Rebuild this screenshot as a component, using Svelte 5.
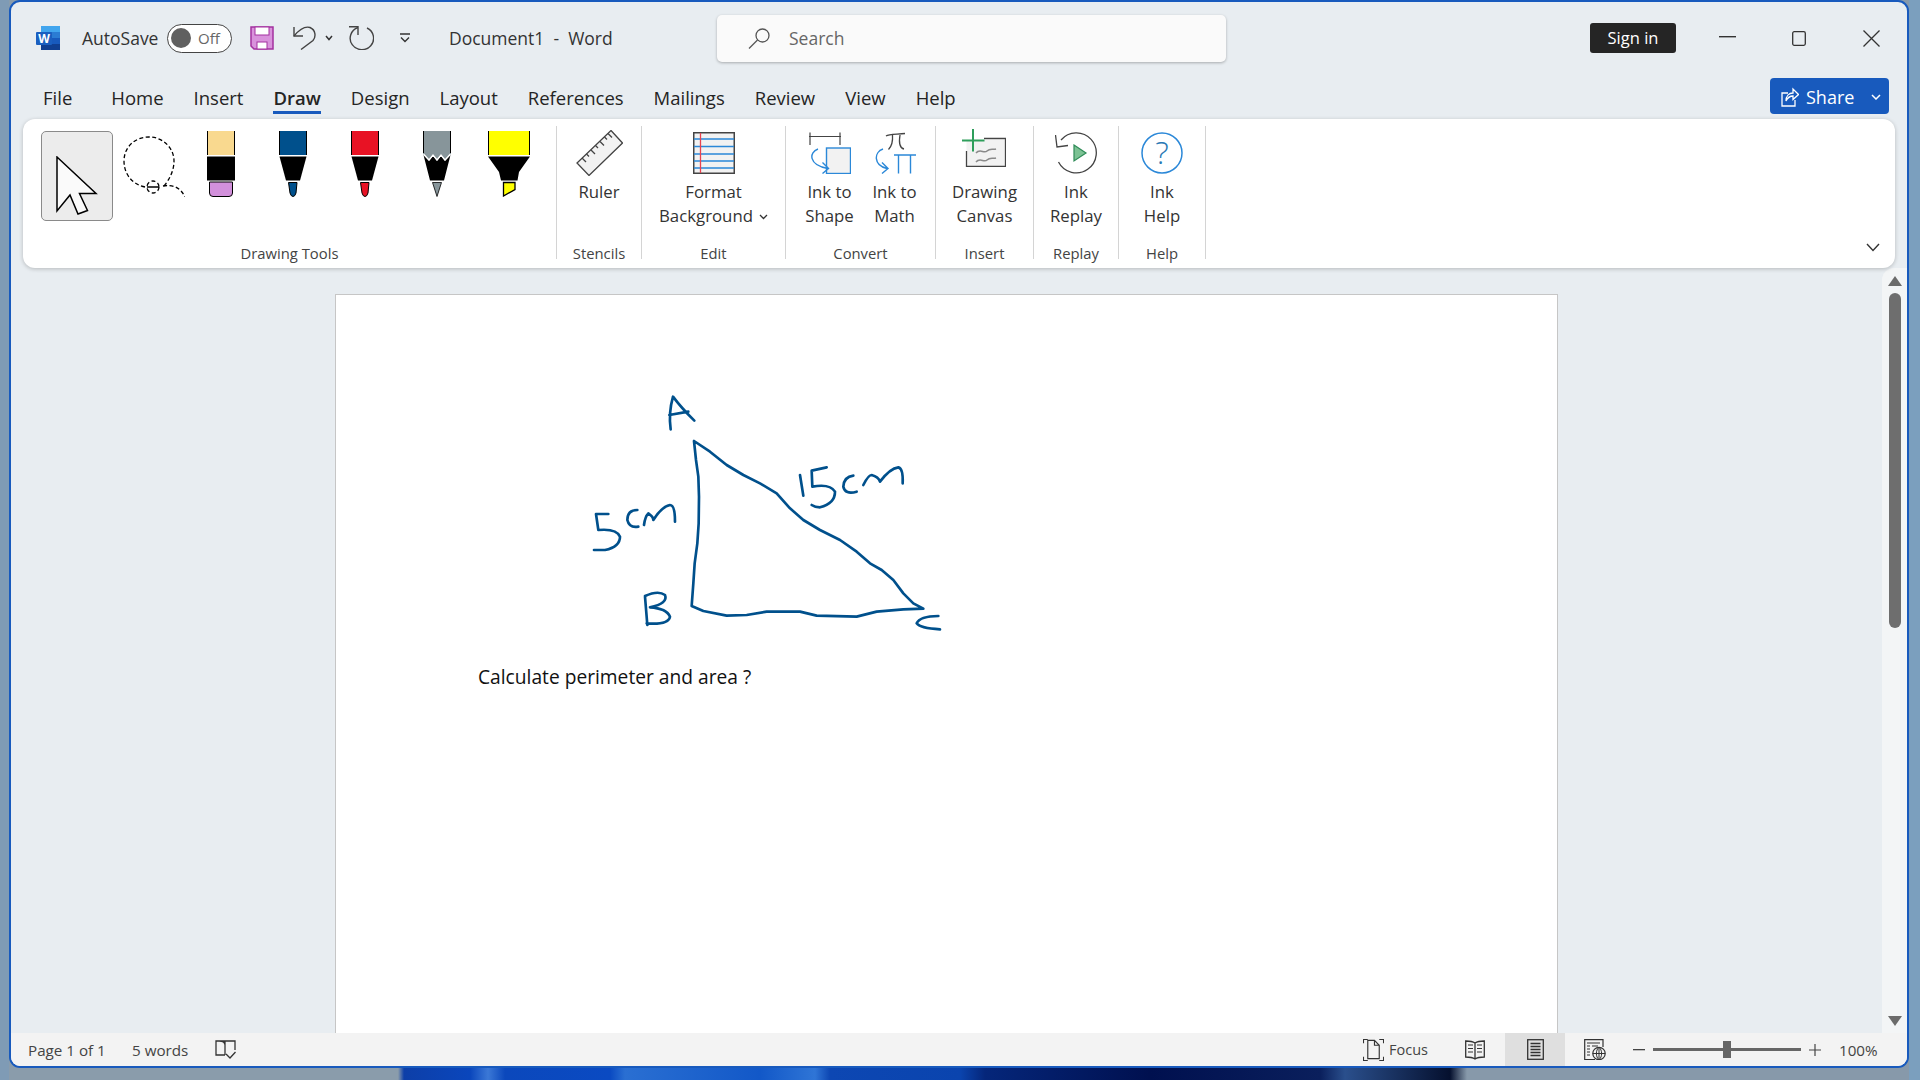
<script>
    const tabs = ['File', 'Home', 'Insert', 'Draw', 'Design', 'Layout', 'References', 'Mailings', 'Review', 'View', 'Help'];

    const pens = [
        { color: '#00508c', tip: '#00508c' },
        { color: '#e81224', tip: '#e81224' }
    ];
</script>

<div class="desktop">
    <div class="window">
        <header class="titlebar">
            <svg class="word" width="24" height="24" viewBox="0 0 24 24">
                <rect x="5" y="0" width="19" height="6" fill="#41a5ee"/>
                <rect x="5" y="6" width="19" height="6" fill="#2b7cd3"/>
                <rect x="5" y="12" width="19" height="6" fill="#185abd"/>
                <rect x="5" y="18" width="19" height="6" fill="#103f91"/>
                <rect x="0" y="6" width="16" height="13" rx="1" fill="#1a5fc0"/>
                <text x="8" y="16.5" text-anchor="middle" class="word-w">W</text>
            </svg>
            <span class="autosave">AutoSave</span>
            <div class="toggle"><span class="knob"></span><span class="off">Off</span></div>
            <svg class="save" width="24" height="24" viewBox="0 0 24 24">
                <path d="M1 1H23V23H4L1 20Z" fill="#d992dc" stroke="#a3319f" stroke-width="1.5"/>
                <rect x="5" y="1" width="14" height="8" fill="#fff" stroke="#a3319f"/>
                <rect x="7" y="16" width="10" height="7" fill="#fff" stroke="#a3319f"/>
            </svg>
            <svg class="undo" width="23" height="24" viewBox="0 0 23 24" fill="none" stroke="#444" stroke-width="1.4">
                <path d="M1 1V10H10"/>
                <path d="M1 10C6 4 12 0 17 1.500C23 4 23 11 20 14.500L8 23.500"/>
            </svg>
            <svg class="small-chev" width="8" height="6" viewBox="0 0 8 6" fill="none" stroke="#333" stroke-width="1.500"><path d="M1 1L4 4.500L7 1"/></svg>
            <svg class="redo" width="25" height="24" viewBox="0 0 25 24" fill="none" stroke="#444" stroke-width="1.4">
                <path d="M0 0.700H9V9"/>
                <path d="M9 1.500A11.700 11.400 0 1 0 18 2"/>
            </svg>
            <svg class="customize" width="10" height="10" viewBox="0 0 10 10" fill="none" stroke="#333" stroke-width="1.400"><path d="M0 1H10M1 4.500L5 8.500L9 4.500"/></svg>
            <span class="doc-title">Document1&nbsp; -&nbsp; Word</span>
            <div class="search">
                <svg width="22" height="21" viewBox="0 0 22 21" fill="none" stroke="#555" stroke-width="1.300">
                    <circle cx="14.500" cy="7.500" r="6.500"/><path d="M9.500 12L1 20.500"/>
                </svg>
                <span>Search</span>
            </div>
            <div class="signin">Sign in</div>
            <svg class="win-min" width="17" height="2" viewBox="0 0 17 2"><rect width="17" height="1.400" fill="#333"/></svg>
            <svg class="win-max" width="14" height="15" viewBox="0 0 14 15" fill="none" stroke="#333" stroke-width="1.300"><rect x="0.700" y="0.700" width="12.600" height="13.600" rx="1.500"/></svg>
            <svg class="win-close" width="17" height="17" viewBox="0 0 17 17" fill="none" stroke="#333" stroke-width="1.300"><path d="M0.500 0.500L16.500 16.500M16.500 0.500L0.500 16.500"/></svg>
        </header>

        <nav class="tabs">
            {#each tabs as tab}
                <span class="tab" class:active={tab === 'Draw'}>{tab}</span>
            {/each}
            <div class="share">
                <svg width="18" height="20" viewBox="0 0 18 20" fill="none" stroke="#fff" stroke-width="1.300">
                    <path d="M7 6H1V19H14V13"/>
                    <path d="M5 14C5 9 8 6 12 6V2L17.500 7.500L12 12.500V9C9 9 6.500 11 5 14Z"/>
                </svg>
                <span>Share</span>
                <svg class="share-chev" width="10" height="6" viewBox="0 0 10 6" fill="none" stroke="#fff" stroke-width="1.500"><path d="M1 1L5 5L9 1"/></svg>
            </div>
        </nav>

        <section class="ribbon">
            <div class="group g-tools">
                <div class="tools">
                    <div class="select">
                        <svg width="42" height="59" viewBox="0 0 42 59">
                            <path d="M1 1L40 37.500H23.500L31.500 54.500L22 58L14 39L1 55Z" fill="#fafafa" stroke="#000" stroke-width="1.500" stroke-linejoin="miter"/>
                        </svg>
                    </div>
                    <svg class="lasso" width="62" height="61" viewBox="0 0 62 61" fill="none" stroke="#000" stroke-width="1.300" stroke-dasharray="4 2.500">
                        <path d="M22 51C8 48 1 37 1 25C1 11 12 1 26 1C40 1 51 12 51 25C51 35 46 44 41 50"/>
                        <circle cx="30" cy="51" r="6"/>
                        <path d="M24 51H36" stroke-dasharray="none"/>
                        <path d="M40 50C50 48 58 52 62 61"/>
                    </svg>
                    <svg class="pen eraser" width="28" height="66" viewBox="0 0 28 66">
                        <rect x="0" y="0" width="28" height="24" fill="#f9d98f"/>
                        <path d="M0.500 0V24M27.500 0V24" stroke="#000"/>
                        <rect x="0" y="25.500" width="28" height="24" fill="#000"/>
                        <path d="M2.500 51V62Q2.500 65.500 6 65.500H22Q25.500 65.500 25.500 62V51Z" fill="#d290db" stroke="#000"/>
                    </svg>
                    {#each pens as pen}
                        <svg class="pen" width="28" height="66" viewBox="0 0 28 66">
                            <rect x="0" y="0" width="28" height="24" fill={pen.color}/>
                            <path d="M0.500 0V24M27.500 0V24" stroke="#000"/>
                            <path d="M0.500 25.500H27.500L21 49.500H7Z" fill="#000"/>
                            <path d="M9.500 51.500H18L17 62Q16 65.500 14 65.500Q12 65.500 11 62Z" fill={pen.tip} stroke="#000"/>
                        </svg>
                    {/each}
                    <svg class="pen" width="28" height="66" viewBox="0 0 28 66">
                        <rect x="0" y="0" width="28" height="24" fill="#87959a"/>
                        <path d="M0.500 0V22M27.500 0V22" stroke="#000"/>
                        <path d="M0.500 24L6 30L10 25L14 30L18 25L22 30L27.500 24L21 49.500H7Z" fill="#000"/>
                        <path d="M0.500 23L6 29L10 24L14 29L18 24L22 29L27.500 23" fill="#87959a" stroke="#fff" stroke-width="1.300"/>
                        <path d="M9.500 51.500H18.500L14 65.500Z" fill="#87959a" stroke="#000" stroke-width="0.800"/>
                    </svg>
                    <svg class="pen marker" width="42" height="66" viewBox="0 0 42 66">
                        <rect x="0" y="0" width="42" height="24" fill="#ffff00"/>
                        <path d="M0.500 0V24M41.500 0V24" stroke="#000"/>
                        <path d="M0 25.500H42L31 41L29.500 49.500H13L11 41Z" fill="#000"/>
                        <path d="M15.500 51.500H27V58.500L15.500 65Z" fill="#ffff00" stroke="#000" stroke-width="1.300"/>
                    </svg>
                </div>
                <div class="label">Drawing Tools</div>
            </div>

            <div class="group g-stencils">
                <div class="btn">
                    <div class="btn-icon">
                        <svg width="47" height="46" viewBox="0 0 47 46" fill="none" stroke="#444" stroke-width="1.300">
                            <path d="M35 0.500L46.500 13L13 45.500L1 33Z" fill="#f2f2f2"/>
                            <path d="M6 28L10 32M10.500 24L13 26.500M15 20L19 24M19.500 15.500L22 18M24 11.500L28 15.500M28.500 7L31 9.500M32 3.500L36 7.500"/>
                        </svg>
                    </div>
                    <div class="btn-text">Ruler</div>
                </div>
                <div class="label">Stencils</div>
            </div>

            <div class="group g-edit">
                <div class="btn">
                    <div class="btn-icon">
                        <svg width="42" height="42" viewBox="0 0 42 42" fill="none">
                            <rect x="0.750" y="0.750" width="40.500" height="40.500" fill="#f2f2f2" stroke="#444" stroke-width="1.500"/>
                            <path d="M1 7H41M1 14.500H41M1 22H41M1 29H41M1 36H41" stroke="#2b88d8" stroke-width="1.300"/>
                            <path d="M7.500 1V41" stroke="#e8434f" stroke-width="1.300"/>
                        </svg>
                    </div>
                    <div class="btn-text">Format</div>
                    <div class="btn-text">Background<svg class="fmt-chev" width="9" height="6" viewBox="0 0 9 6" fill="none" stroke="#333" stroke-width="1.300"><path d="M1 1L4.500 4.500L8 1"/></svg></div>
                </div>
                <div class="label">Edit</div>
            </div>

            <div class="group g-convert">
                <div class="convert-row">
                    <div class="btn">
                        <div class="btn-icon">
                            <svg width="42" height="42" viewBox="0 0 42 42" fill="none">
                                <path d="M1 0.500V13M31 0.500V13M0 4.500H32" stroke="#444" stroke-width="1.200"/>
                                <rect x="17.500" y="16" width="24" height="25.500" fill="#f2f2f2" stroke="#2b88d8" stroke-width="1.400"/>
                                <path d="M9 17C0 20 -1 33 19 36.500M13.500 30.500L19.500 36.500L13.500 41.500" stroke="#2b88d8" stroke-width="1.400"/>
                            </svg>
                        </div>
                        <div class="btn-text">Ink to</div>
                        <div class="btn-text">Shape</div>
                    </div>
                    <div class="btn">
                        <div class="btn-icon">
                            <svg width="42" height="42" viewBox="0 0 42 42" fill="none">
                                <path d="M12 4C15 2 24 2.500 31 1.500M18.500 3C19 10 17 15 14.500 17.500M26 3C25 9 25.500 16 30 17" stroke="#444" stroke-width="1.300"/>
                                <path d="M9 17C0 20 -1 33 13 36.500M8 30.500L14 36.500L8 41.500" stroke="#2b88d8" stroke-width="1.400"/>
                                <path d="M20 23H42M24.500 23V41.500M36.500 23V41.500" stroke="#2b88d8" stroke-width="1.400"/>
                            </svg>
                        </div>
                        <div class="btn-text">Ink to</div>
                        <div class="btn-text">Math</div>
                    </div>
                </div>
                <div class="label">Convert</div>
            </div>

            <div class="group g-insert">
                <div class="btn">
                    <div class="btn-icon canvas-icon">
                        <svg width="44" height="38" viewBox="0 0 44 38" fill="none">
                            <path d="M4.500 11H43.500V37.500H4.500Z" fill="#f2f2f2"/>
                            <path d="M22 9.500H43.500V37.500H4.500V22" stroke="#444" stroke-width="1.300"/>
                            <path d="M0 11.500H22.500M11 0V22.500" stroke="#2e9e5b" stroke-width="2"/>
                            <path d="M14 24C18 19 22 25 25 22C28 19 31 21 34 20M14 33C18 28 22 34 25 31C28 28 31 30 34 29" stroke="#8a8a8a" stroke-width="1.500"/>
                        </svg>
                    </div>
                    <div class="btn-text">Drawing</div>
                    <div class="btn-text">Canvas</div>
                </div>
                <div class="label">Insert</div>
            </div>

            <div class="group g-replay">
                <div class="btn">
                    <div class="btn-icon">
                        <svg width="42" height="42" viewBox="0 0 42 42" fill="none">
                            <path d="M6 8A20 20 0 1 1 3.500 30" stroke="#444" stroke-width="1.300"/>
                            <path d="M0.500 3L2 15L13 13.500" stroke="#444" stroke-width="1.300"/>
                            <path d="M19 13L31 21L19 29Z" fill="#7cc294" stroke="#2e8b57" stroke-width="1.200"/>
                        </svg>
                    </div>
                    <div class="btn-text">Ink</div>
                    <div class="btn-text">Replay</div>
                </div>
                <div class="label">Replay</div>
            </div>

            <div class="group g-help">
                <div class="btn">
                    <div class="btn-icon">
                        <svg width="42" height="48" viewBox="0 -3 42 48" fill="none">
                            <circle cx="21" cy="21" r="20" stroke="#2b88d8" stroke-width="1.500"/>
                            <text x="21" y="32" text-anchor="middle" class="help-mark">?</text>
                        </svg>
                    </div>
                    <div class="btn-text">Ink</div>
                    <div class="btn-text">Help</div>
                </div>
                <div class="label">Help</div>
            </div>

            <svg class="collapse" width="14" height="9" viewBox="0 0 14 9" fill="none" stroke="#333" stroke-width="1.400"><path d="M1 1L7 7.500L13 1"/></svg>
        </section>

        <main class="main">
            <div class="canvas">
                <article class="page">
                    <svg class="ink" width="400" height="260" viewBox="0 0 1200 780" fill="none" stroke="#00508c" stroke-width="8" stroke-linecap="round" stroke-linejoin="round">
                        <path d="M372 183L378 240L385 290L387 350L386 430L382 490L374 550L370 610L365 678L400 693L470 707L530 705L590 695L690 695L740 707L860 710L920 695L1000 688L1060 686L1030 670L1000 640L970 600L935 570L900 550L860 515L810 480L750 450L700 420L660 385L620 340L570 310L520 285L470 255L420 215Z"/>
                        <path d="M302 148Q295 100 309 50Q335 85 373 122M298 105L355 95"/>
                        <path d="M115 402L78 402L85 450Q140 445 150 470Q150 500 105 510L72 510"/>
                        <path d="M202 390Q172 390 172 420Q178 445 205 440"/>
                        <path d="M222 435Q225 410 235 400Q250 410 250 420Q275 380 300 375Q315 375 315 425"/>
                        <path d="M690 285L700 347"/>
                        <path d="M770 262L725 272L727 320Q780 310 795 335Q795 370 750 382Q735 382 725 375"/>
                        <path d="M850 287Q822 290 820 320Q825 345 860 335"/>
                        <path d="M880 315Q895 285 905 285Q925 290 930 305Q960 265 985 262Q1000 265 998 310"/>
                        <path d="M225 650L232 735M225 648Q265 630 285 645Q295 670 240 682Q290 685 300 710Q295 735 230 730"/>
                        <path d="M1105 708Q1050 708 1040 730Q1050 745 1110 748"/>
                    </svg>
                    <p class="question">Calculate perimeter and area ?</p>
                </article>
            </div>
            <aside class="scrollbar">
                <span class="arrow up"></span>
                <span class="thumb"></span>
                <span class="arrow down"></span>
            </aside>
        </main>

        <footer class="status">
            <span class="st-page">Page 1 of 1</span>
            <span class="st-words">5 words</span>
            <svg class="st-book" width="21" height="19" viewBox="0 0 21 19" fill="none" stroke="#333" stroke-width="1.300">
                <path d="M10 15H1V1H10M10 1V15M10 1H20V10M4 1C8 1 10 3 10 5"/>
                <path d="M11 14L15 18L20.500 12"/>
            </svg>
            <div class="focus">
                <svg width="22" height="24" viewBox="0 0 22 24" fill="none" stroke="#333" stroke-width="1.200">
                    <path d="M0.500 5V1H5M17 1H21.500V5M0.500 19V23H5M17 23H21.500V19"/>
                    <path d="M5 2H12L17 7V21H5ZM12 2V7H17"/>
                </svg>
                <span>Focus</span>
            </div>
            <svg class="view-read" width="20" height="20" viewBox="0 0 20 20" fill="none" stroke="#333" stroke-width="1.300">
                <path d="M10 3C7 1 4 1 0.700 1V17C4 17 7 17 10 19C13 17 16 17 19.300 17V1C16 1 13 1 10 3ZM10 3V19"/>
                <path d="M3 5H8M3 8.500H8M3 12H8M12 5H17M12 8.500H17M12 12H17" stroke-width="1"/>
            </svg>
            <div class="view-print">
                <svg width="17" height="21" viewBox="0 0 17 21" fill="none" stroke="#333" stroke-width="1.300">
                    <rect x="0.700" y="0.700" width="15.600" height="19.600"/>
                    <path d="M3.500 4.500H13.500M3.500 7.500H13.500M3.500 10.500H13.500M3.500 13.500H13.500M3.500 16.500H13.500" stroke-width="1.400"/>
                </svg>
            </div>
            <svg class="view-web" width="22" height="21" viewBox="0 0 22 21" fill="none" stroke="#333" stroke-width="1.200">
                <path d="M11 20.500H0.700V0.700H19V8"/>
                <path d="M3 4H16M3 7H6M8 7H14M3 10H6M3 13H6M3 16H6" stroke-width="1.100"/>
                <circle cx="15" cy="14.500" r="6.200" fill="#f3f3f3"/>
                <path d="M8.800 14.500H21.200M15 8.300V20.700M15 8.300C11.500 11 11.500 18 15 20.700M15 8.300C18.500 11 18.500 18 15 20.700" stroke-width="1"/>
            </svg>
            <svg class="zoom-minus" width="12" height="2" viewBox="0 0 12 2"><rect width="12" height="1.300" fill="#444"/></svg>
            <div class="slider"><span class="slider-thumb"></span></div>
            <svg class="zoom-plus" width="12" height="12" viewBox="0 0 12 12" fill="none" stroke="#444" stroke-width="1.200"><path d="M0 6H12M6 0V12"/></svg>
            <span class="zoom-val">100%</span>
        </footer>
    </div>
</div>

<style>
    :global(body) {
        background: #8399ad;
    }

    .desktop {
        width: 1920px;
        height: 1080px;
        overflow: hidden;
        background:
            linear-gradient(90deg, #7f9bb5 0, #7f9bb5 9px, transparent 9px, transparent 1909px, #7b9fbe 1909px),
            linear-gradient(90deg, #8a9cab 0, #8a9cab 398px, #0d3fa8 404px, #0a46bc 470px, #3b78d6 488px, #0b48bc 505px, #0a4ac2 610px, #2a6fd2 625px, #1258c8 760px, #2f75d6 815px, #0d47b3 830px, #0a44ae 960px, #05267a 985px, #00104f 1150px, #0a1f5c 1320px, #2a4f8c 1345px, #05102e 1450px, #8799aa 1467px, #8799aa 1920px);
        font-family: "Open Sans", "Noto Sans", sans-serif;
        color: #242424;
    }

    .window {
        box-sizing: border-box;
        width: 1900px;
        height: 1068px;
        margin-left: 9px;
        border: 2px solid #185abd;
        border-radius: 11px;
        background: #e8edf1;
        display: flex;
        flex-direction: column;
        overflow: hidden;
    }

    .titlebar {
        height: 74px;
        flex: none;
        box-sizing: border-box;
        padding-bottom: 2px;
        display: flex;
        align-items: center;
        font-size: 17.500px;
    }

    .word { margin-left: 25px; }
    .word-w { font-size: 12px; font-weight: 700; fill: #fff; }

    .autosave { width: 85px; margin-left: 22px; color: #333; }

    .toggle {
        box-sizing: border-box;
        width: 65px;
        height: 29px;
        border: 1.5px solid #444;
        border-radius: 15px;
        background: #fff;
        display: flex;
        align-items: center;
        padding-left: 3px;
        gap: 7px;
    }
    .knob { width: 20px; height: 20px; border-radius: 50%; background: #606060; }
    .off { font-size: 15px; color: #666; }

    .save { margin-left: 18px; }
    .undo { margin-left: 19px; }
    .small-chev { margin-left: 9px; }
    .redo { margin-left: 16px; }
    .customize { margin-left: 26px; }

    .doc-title { width: 163px; margin-left: 39px; color: #333; white-space: nowrap; }

    .search {
        box-sizing: border-box;
        width: 509px;
        height: 47px;
        margin-left: 105px;
        padding-left: 31px;
        border-radius: 5px;
        background: #fafafa;
        box-shadow: 0 1px 3px rgba(0, 0, 0, 0.28);
        display: flex;
        align-items: center;
        gap: 19px;
        color: #666;
    }

    .signin {
        width: 86px;
        height: 30px;
        margin-left: 364px;
        border-radius: 3px;
        background: #252525;
        color: #fff;
        text-align: center;
        line-height: 30px;
        font-size: 16.500px;
    }

    .win-min { margin-left: 43px; margin-top: -3px; }
    .win-max { margin-left: 56px; }
    .win-close { margin-left: 57px; }

    .tabs {
        height: 43px;
        flex: none;
        box-sizing: border-box;
        padding: 10px 18px 0 32px;
        display: flex;
        align-items: flex-start;
        gap: 30px;
        font-size: 18.500px;
    }

    .tab {
        line-height: 24px;
        padding-bottom: 1px;
        border-bottom: 3px solid transparent;
        white-space: nowrap;
    }
    .tab:first-child { margin-right: 9px; }
    .tab.active { font-weight: 600; border-bottom-color: #185abd; }

    .share {
        width: 119px;
        height: 36px;
        margin: -8px 0 0 auto;
        box-sizing: border-box;
        padding: 1px 0 0 11px;
        border-radius: 4px;
        background: #185abd;
        color: #fff;
        display: flex;
        align-items: center;
        gap: 7px;
        font-size: 18px;
    }
    .share-chev { margin-left: 10px; }

    .ribbon {
        height: 149px;
        flex: none;
        margin: 0 12px;
        border-radius: 12px;
        background: #fff;
        box-shadow: 0 1px 4px rgba(0, 0, 0, 0.22);
        display: flex;
        position: relative;
        z-index: 1;
        font-size: 16.800px;
        color: #333;
    }

    .group {
        box-sizing: border-box;
        height: 133px;
        margin: 7px 0 9px;
        border-right: 1px solid #d4d4d4;
        display: flex;
        flex-direction: column;
        align-items: center;
    }
    .g-tools { width: 534px; align-items: stretch; }
    .g-stencils { width: 85px; }
    .g-edit { width: 144px; }
    .g-convert { width: 150px; }
    .g-insert { width: 98px; }
    .g-replay { width: 85px; }
    .g-help { width: 87px; }

    .label {
        height: 18px;
        margin-top: auto;
        margin-bottom: -3px;
        line-height: 18px;
        font-size: 14.800px;
        text-align: center;
        color: #444;
    }

    .tools {
        display: flex;
        align-items: flex-start;
        padding: 5px 0 0 18px;
    }

    .select {
        box-sizing: border-box;
        width: 72px;
        height: 90px;
        border: 1px solid #8a8a8a;
        border-radius: 5px;
        background: #ececec;
        padding: 24px 0 0 14px;
    }
    .select svg { display: block; }

    .lasso { margin: 5px 0 0 10px; }
    .eraser { margin-left: 22px; }
    .pen + .pen { margin-left: 44px; }
    .pen.marker { margin-left: 37px; }

    .convert-row { display: flex; align-self: stretch; padding-left: 11px; }
    .convert-row .btn { width: 65px; }

    .btn {
        display: flex;
        flex-direction: column;
        align-items: center;
        padding-top: 2px;
    }

    .btn-icon {
        height: 50px;
        margin-bottom: 2px;
        display: flex;
        align-items: center;
    }
    .canvas-icon svg { margin-bottom: 10px; }

    .btn-text { line-height: 24px; white-space: nowrap; }
    .fmt-chev { margin-left: 6px; vertical-align: 2px; }

    .help-mark {
        font-size: 32px;
        font-weight: 300;
        fill: #2b79b5;
    }

    .collapse {
        margin: auto 15px 16px auto;
    }

    .main {
        flex: 1;
        min-height: 0;
        display: flex;
    }

    .canvas {
        flex: 1;
        min-width: 0;
        overflow: hidden;
        padding: 26px 0 0 324px;
    }

    .page {
        box-sizing: border-box;
        width: 1223px;
        height: 900px;
        background: #fff;
        border: 1px solid #c6c6c6;
    }

    .ink {
        display: block;
        margin: 85px 0 0 234px;
    }

    .question {
        margin: 24px 0 0 142px;
        font-size: 19.200px;
        line-height: 26px;
        color: #111;
    }

    .scrollbar {
        width: 25px;
        flex: none;
        border-radius: 12px 0 0 0;
        background: #f3f5f6;
        display: flex;
        flex-direction: column;
        align-items: center;
        box-sizing: border-box;
        padding-top: 8px;
    }

    .arrow {
        width: 0;
        height: 0;
        border-left: 7px solid transparent;
        border-right: 7px solid transparent;
    }
    .arrow.up { border-bottom: 10px solid #6b6b6b; }
    .arrow.down { border-top: 10px solid #6b6b6b; margin-top: 388px; }

    .thumb {
        width: 12px;
        height: 335px;
        margin-top: 7px;
        border-radius: 6px;
        background: #6e6e6e;
    }

    .status {
        height: 33px;
        flex: none;
        background: #f3f3f3;
        position: relative;
        z-index: 1;
        display: flex;
        align-items: center;
        font-size: 15.200px;
        color: #444;
    }

    .st-page { width: 104px; margin-left: 17px; white-space: nowrap; }
    .st-words { width: 83px; white-space: nowrap; }
    .st-book { flex: none; }

    .focus {
        margin-left: 1127px;
        width: 65px;
        display: flex;
        align-items: center;
        gap: 5px;
        font-size: 14.500px;
    }
    .view-read { margin-left: 37px; }
    .view-print {
        width: 60px;
        height: 33px;
        margin-left: 20px;
        background: #dfdfdf;
        display: flex;
        align-items: center;
        justify-content: center;
    }
    .view-web { margin-left: 19px; }
    .zoom-minus { margin-left: 27px; }

    .slider {
        width: 148px;
        height: 3px;
        margin-left: 8px;
        background: #666;
        display: flex;
        align-items: center;
        padding-left: 70px;
        box-sizing: border-box;
    }
    .slider-thumb { width: 8px; height: 17px; background: #666; flex: none; }

    .zoom-plus { margin-left: 8px; }
    .zoom-val { margin-left: 18px; white-space: nowrap; }
</style>
